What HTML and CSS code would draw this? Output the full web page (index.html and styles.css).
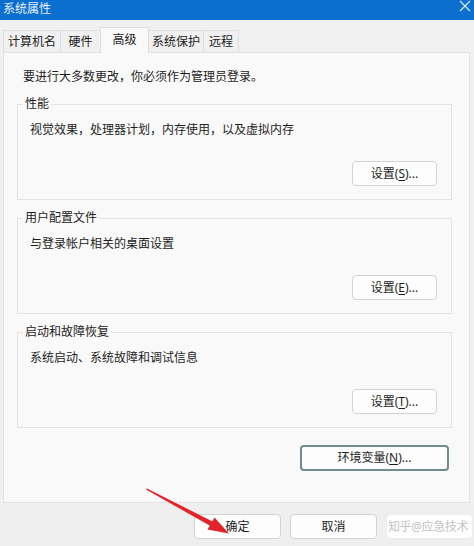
FILE: index.html
```html
<!DOCTYPE html>
<html lang="zh-CN">
<head>
<meta charset="utf-8">
<title>系统属性</title>
<link rel="stylesheet" href="styles.css">
</head>
<body>
<div class="window">
  <div class="titlebar">
    <span class="title">系统属性</span>
    <svg class="close" width="12" height="12" viewBox="0 0 12 12"><path d="M1 1 L11 11 M11 1 L1 11" stroke="#dce9f8" stroke-width="1.2" fill="none"/></svg>
  </div>
  <div class="tabs">
    <div class="tab tab-name">计算机名</div>
    <div class="tab tab-hw">硬件</div>
    <div class="tab tab-adv active">高级</div>
    <div class="tab tab-prot">系统保护</div>
    <div class="tab tab-remote">远程</div>
  </div>
  <div class="panel">
    <p class="intro">要进行大多数更改，你必须作为管理员登录。</p>
    <fieldset class="group">
      <legend>性能</legend>
      <p class="desc">视觉效果，处理器计划，内存使用，以及虚拟内存</p>
      <button class="btn btn-set">设置(<u>S</u>)...</button>
    </fieldset>
    <fieldset class="group">
      <legend>用户配置文件</legend>
      <p class="desc">与登录帐户相关的桌面设置</p>
      <button class="btn btn-set">设置(<u>E</u>)...</button>
    </fieldset>
    <fieldset class="group">
      <legend>启动和故障恢复</legend>
      <p class="desc">系统启动、系统故障和调试信息</p>
      <button class="btn btn-set">设置(<u>T</u>)...</button>
    </fieldset>
    <button class="btn btn-env">环境变量(<u>N</u>)...</button>
  </div>
  <div class="footer">
    <button class="btn btn-foot">确定</button>
    <button class="btn btn-foot">取消</button>
    <button class="btn btn-foot btn-apply"><span class="mark">知乎@应急技术</span></button>
  </div>
  <svg class="arrow" width="474" height="546" viewBox="0 0 474 546">
    <polygon points="146,489.5 147,488.5 212.5,521.5 210.5,526" fill="#e3232a"/>
    <polygon points="229,533.5 214.5,517.5 207.5,529.5" fill="#e3232a"/>
  </svg>
</div>
</body>
</html>
```

FILE: styles.css
```css
* {
  box-sizing: border-box;
}

html, body {
  margin: 0;
  padding: 0;
}

body {
  width: 474px;
  height: 546px;
  overflow: hidden;
  background: #f0f0f0;
  font-family: "Noto Sans", "Noto Sans CJK SC", sans-serif;
  font-size: 12px;
  color: #1e1e1e;
}

.window {
  position: relative;
  width: 474px;
  height: 546px;
  display: flex;
  flex-direction: column;
}

/* blue caption strip */
.titlebar {
  height: 20px;
  background: #0b6fd0;
  display: flex;
  justify-content: space-between;
  align-items: flex-start;
  padding: 0 3px 0 3px;
}

.title {
  color: #e6effa;
  line-height: 18px;
}

.close {
  margin-top: 0;
}

/* tab strip */
.tabs {
  height: 32px;
  display: flex;
  align-items: flex-end;
  padding-left: 3px;
  background: #f0f0f0;
}

.tab {
  height: 22px;
  line-height: 22px;
  text-align: center;
  border: 1px solid #dedede;
  border-bottom: none;
  margin-right: -1px;
  background: #f0f0f0;
  color: #222;
}

.tab-name { width: 58px; }
.tab-hw { width: 41px; }
.tab-adv { width: 49px; }
.tab-prot { width: 56px; }
.tab-remote { width: 36px; }

.tab.active {
  position: relative;
  z-index: 1;
  height: 26px;
  line-height: 24px;
  background: #f9f9f9;
  margin-bottom: -1px;
  color: #1a1a1a;
}

/* property page body */
.panel {
  height: 451px;
  margin: 0 4px 0 3px;
  background: #f9f9f9;
  border: 1px solid #e2e2e2;
  display: flex;
  flex-direction: column;
}

.intro {
  margin: 16px 0 0 19px;
  line-height: 16px;
}

.group {
  margin: 10px 17px 0 13px;
  padding: 0 14px 13px 12px;
  border: 1px solid #e3e3e3;
  display: flex;
  flex-direction: column;
  min-width: 0;
}

.intro + .group {
  margin-top: 11px;
}

.group legend {
  margin-left: -7px;
  padding: 0 2px;
  line-height: 16px;
  color: #222;
}

.desc {
  margin: 10px 0 0 0;
  line-height: 16px;
}

.btn {
  font-family: inherit;
  font-size: 12px;
  color: #1e1e1e;
  background: #fdfdfd;
  border: 1px solid #d3d3d3;
  border-radius: 4px;
  height: 25px;
  padding: 0;
  line-height: 22px;
  text-align: center;
}

.btn u {
  text-underline-offset: 2px;
}

.btn-set {
  align-self: flex-end;
  width: 85px;
  margin-top: 23px;
}

.btn-env {
  align-self: flex-end;
  width: 149px;
  height: 26px;
  margin: 17px 20px 0 0;
  border: 2px solid #728a92;
}

/* dialog buttons */
.footer {
  flex: 1;
  background: #efefef;
  display: flex;
  justify-content: flex-end;
  align-items: flex-start;
  gap: 9px;
  padding: 11px 1px 0 0;
}

.btn-foot {
  width: 87px;
}

.btn-apply {
  background: #fefefe;
  border-color: #ececec;
  white-space: nowrap;
  overflow: hidden;
  text-align: left;
  padding-left: 1px;
}

.mark {
  color: #c3c3c3;
  letter-spacing: -0.4px;
}

/* red pointer drawn across the footer */
.arrow {
  position: absolute;
  left: 0;
  top: 0;
  pointer-events: none;
}
```
